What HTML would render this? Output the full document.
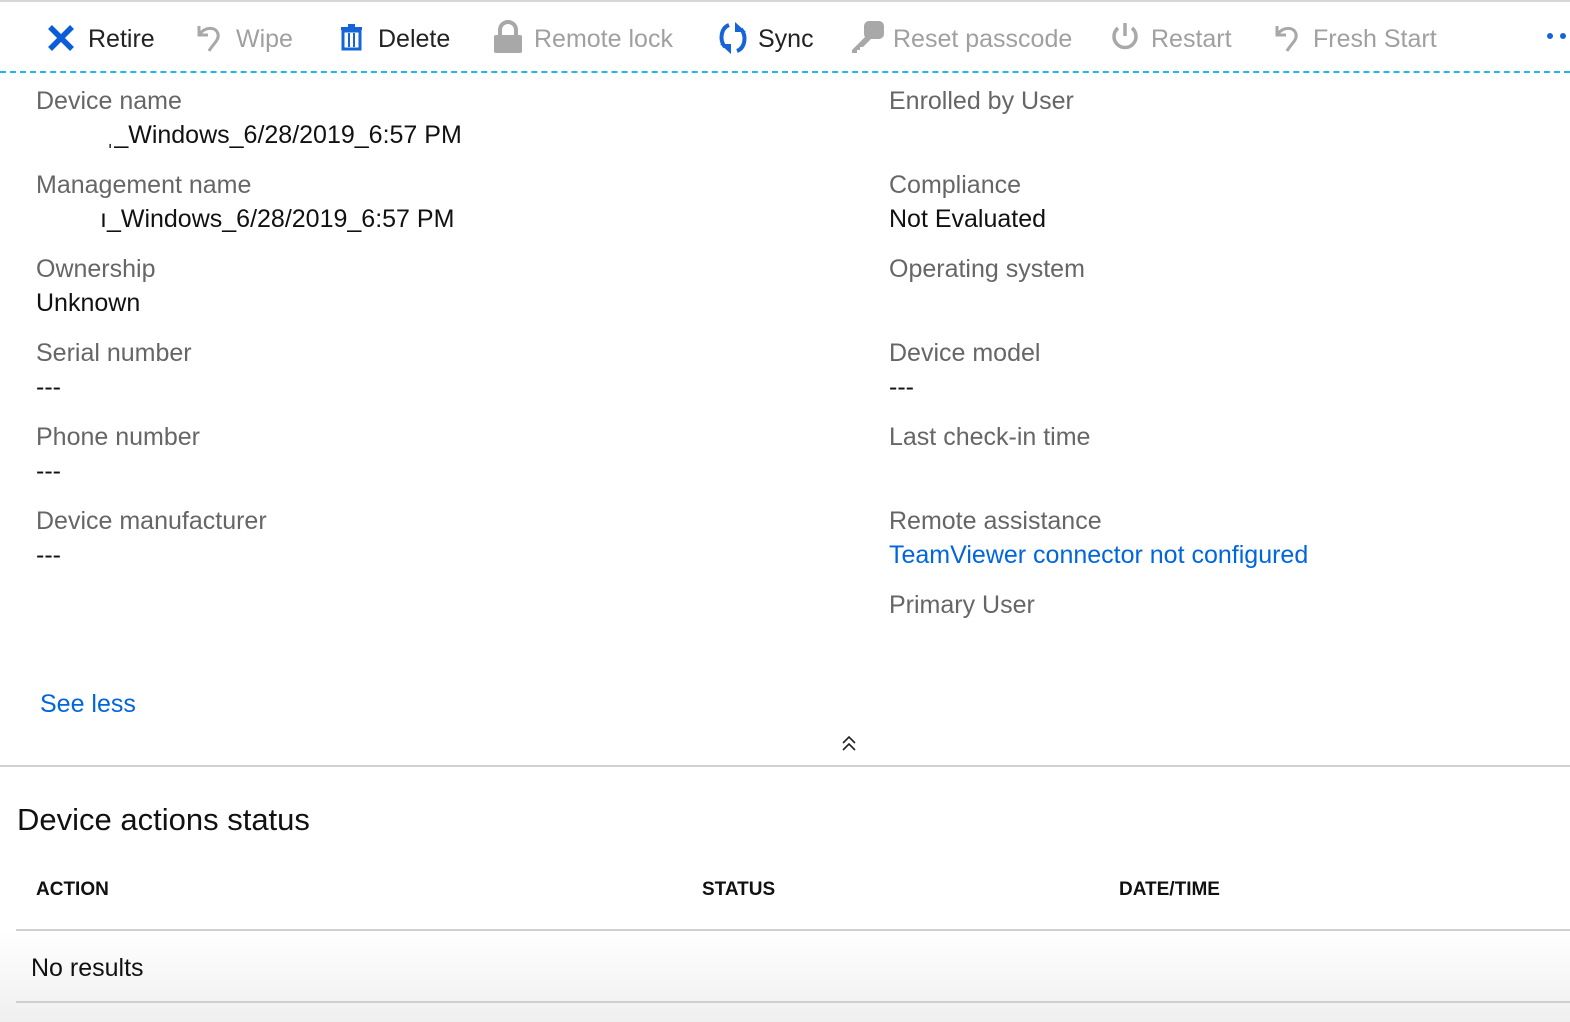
<!DOCTYPE html>
<html><head><style>
*{margin:0;padding:0;box-sizing:border-box}
body{width:1570px;height:1022px;overflow:hidden;background:#fff;font-family:"Liberation Sans",sans-serif;position:relative}
.a{position:absolute;white-space:nowrap;font-size:25px;line-height:28px}
.l{color:#666}
.v{color:#111}
.k{color:#0066dd}
.tb{position:absolute;top:23px;font-size:25px;line-height:32px;white-space:nowrap}
.g{color:#a0a0a0}
.d{color:#222}
svg{position:absolute}
.h{position:absolute;font-size:19px;font-weight:bold;color:#111;top:879px}
</style></head><body>
<div style="position:absolute;left:0;top:0;width:1570px;height:2px;background:#d6d6d6"></div>
<div style="position:absolute;left:0;top:71px;width:1570px;border-top:2px dashed #20b8e8"></div>

<svg style="left:46px;top:24px" width="30" height="28" viewBox="0 0 30 28"><path d="M4 3L26 25M26 3L4 25" stroke="#0b5ed8" stroke-width="5.5"/></svg>
<div class="tb d" style="left:88px">Retire</div>
<svg style="left:194px;top:22px" width="32" height="32" viewBox="0 0 32 32"><path d="M5 4v9h9" fill="none" stroke="#a8a8a8" stroke-width="3"/><path d="M6 12C10 5 22 4 24 12c1.5 6-5 10-9 17" fill="none" stroke="#a8a8a8" stroke-width="3"/></svg>
<div class="tb g" style="left:236px">Wipe</div>
<svg style="left:340px;top:24px" width="24" height="28" viewBox="0 0 24 28"><rect x="1" y="3" width="21" height="3" fill="#1565d8"/><rect x="8" y="0" width="7" height="3" fill="#1565d8"/><rect x="3" y="7" width="17" height="18" fill="none" stroke="#1565d8" stroke-width="3"/><path d="M9 9v14M14 9v14" stroke="#1565d8" stroke-width="2"/></svg>
<div class="tb d" style="left:378px">Delete</div>
<svg style="left:492px;top:20px" width="32" height="34" viewBox="0 0 32 34"><path d="M8 15V10a8 8 0 0 1 16 0v5" fill="none" stroke="#a8a8a8" stroke-width="4"/><rect x="2" y="15" width="28" height="18" rx="2" fill="#a8a8a8"/></svg>
<div class="tb g" style="left:534px">Remote lock</div>
<svg style="left:715px;top:20px" width="36" height="36" viewBox="0 0 36 36"><path d="M14 5C6 8 4 20 10 27M22 31C30 28 32 16 26 9" fill="none" stroke="#1565d8" stroke-width="4"/><path d="M5 24h11v10z M31 12h-11v-10z" fill="#1565d8"/></svg>
<div class="tb d" style="left:758px">Sync</div>
<svg style="left:850px;top:20px" width="36" height="34" viewBox="0 0 36 34"><rect x="14" y="1" width="20" height="18" rx="5" fill="#a8a8a8"/><path d="M18 14L2 30v3h5v-3h3v-3h3l8-8z" fill="#a8a8a8"/></svg>
<div class="tb g" style="left:893px">Reset passcode</div>
<svg style="left:1110px;top:21px" width="30" height="32" viewBox="0 0 30 32"><path d="M15 2v13" stroke="#a8a8a8" stroke-width="3.5"/><path d="M8 7a11 11 0 1 0 14 0" fill="none" stroke="#a8a8a8" stroke-width="3.5"/></svg>
<div class="tb g" style="left:1151px">Restart</div>
<svg style="left:1272px;top:22px" width="32" height="32" viewBox="0 0 32 32"><path d="M5 4v9h9" fill="none" stroke="#a8a8a8" stroke-width="3"/><path d="M6 12C10 5 22 4 24 12c1.5 6-5 10-9 17" fill="none" stroke="#a8a8a8" stroke-width="3"/></svg>
<div class="tb g" style="left:1313px">Fresh Start</div>
<div style="position:absolute;left:1547px;top:33px;width:6px;height:6px;border-radius:3px;background:#1565d8"></div>
<div style="position:absolute;left:1560px;top:33px;width:6px;height:6px;border-radius:3px;background:#1565d8"></div>

<div class="a l" style="left:36px;top:87px">Device name</div>
<div class="a v" style="left:106px;top:121px">ˌ_Windows_6/28/2019_6:57 PM</div>
<div class="a l" style="left:36px;top:171px">Management name</div>
<div class="a v" style="left:100px;top:205px">ı_Windows_6/28/2019_6:57 PM</div>
<div class="a l" style="left:36px;top:255px">Ownership</div>
<div class="a v" style="left:36px;top:289px">Unknown</div>
<div class="a l" style="left:36px;top:339px">Serial number</div>
<div class="a v" style="left:36px;top:373px">---</div>
<div class="a l" style="left:36px;top:423px">Phone number</div>
<div class="a v" style="left:36px;top:457px">---</div>
<div class="a l" style="left:36px;top:507px">Device manufacturer</div>
<div class="a v" style="left:36px;top:541px">---</div>

<div class="a l" style="left:889px;top:87px">Enrolled by User</div>
<div class="a l" style="left:889px;top:171px">Compliance</div>
<div class="a v" style="left:889px;top:205px">Not Evaluated</div>
<div class="a l" style="left:889px;top:255px">Operating system</div>
<div class="a l" style="left:889px;top:339px">Device model</div>
<div class="a v" style="left:889px;top:373px">---</div>
<div class="a l" style="left:889px;top:423px">Last check-in time</div>
<div class="a l" style="left:889px;top:507px">Remote assistance</div>
<div class="a k" style="left:889px;top:541px">TeamViewer connector not configured</div>
<div class="a l" style="left:889px;top:591px">Primary User</div>

<div class="a k" style="left:40px;top:690px">See less</div>
<svg style="left:841px;top:734px" width="16" height="18" viewBox="0 0 16 18"><path d="M2 9l6-6 6 6M2 16l6-6 6 6" fill="none" stroke="#222" stroke-width="1.6"/></svg>
<div style="position:absolute;left:0;top:765px;width:1570px;height:2px;background:#d0d0d0"></div>

<div style="position:absolute;left:0;top:930px;width:1570px;height:92px;background:linear-gradient(#fff,#efefef)"></div>
<div class="a" style="left:17px;top:802px;font-size:31px;line-height:36px;color:#111">Device actions status</div>
<div class="h" style="left:36px">ACTION</div>
<div class="h" style="left:702px">STATUS</div>
<div class="h" style="left:1119px">DATE/TIME</div>
<div style="position:absolute;left:16px;top:929px;width:1554px;height:2px;background:#cfcfcf"></div>
<div class="a v" style="left:31px;top:954px">No results</div>
<div style="position:absolute;left:16px;top:1001px;width:1554px;height:2px;background:#cfcfcf"></div>
</body></html>
